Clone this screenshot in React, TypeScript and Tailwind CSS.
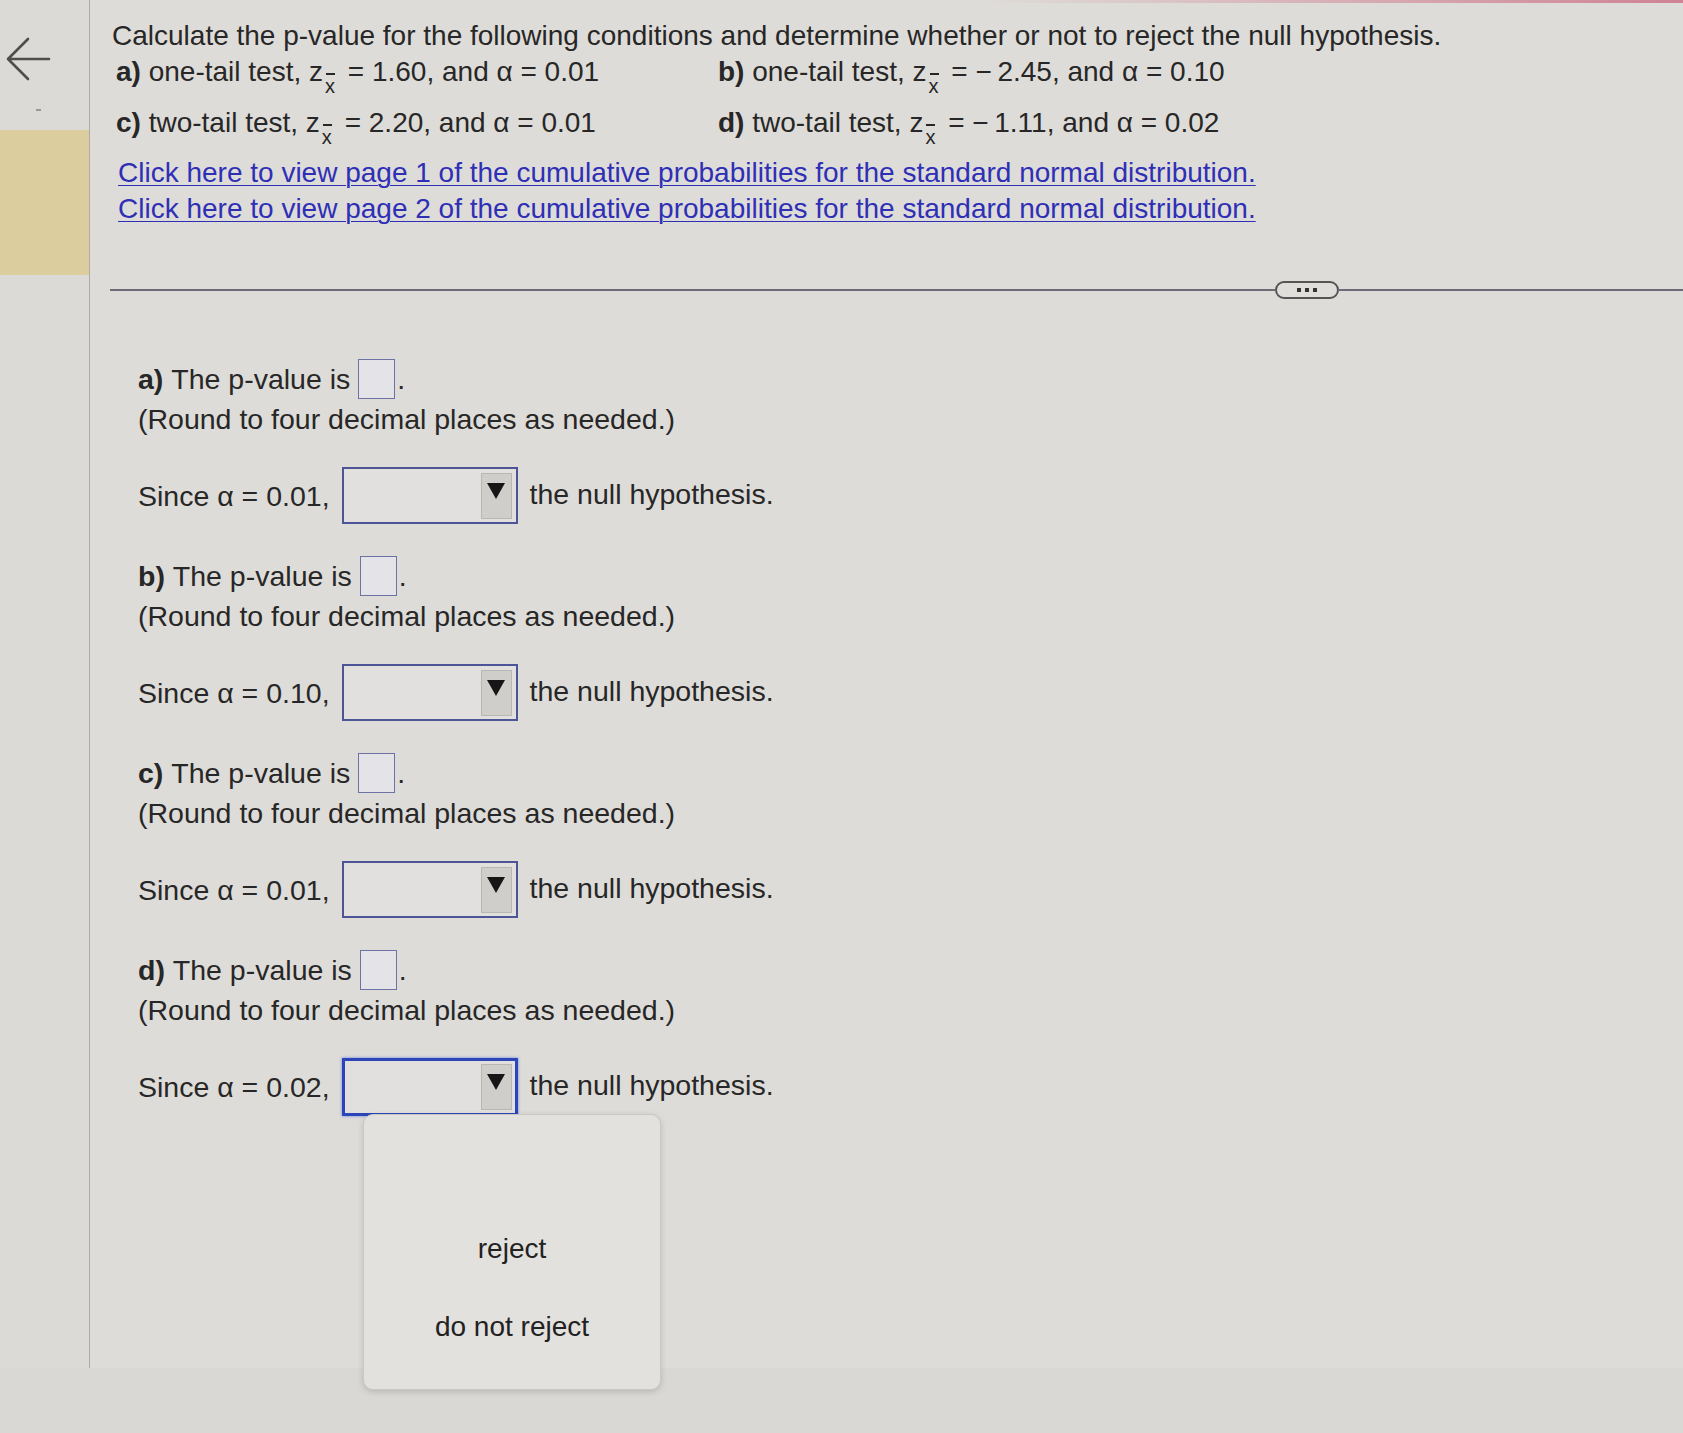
// z with an x-bar subscript, as the question text shows it
function Zx() {
  return (
    <span>
      z
      <span className="relative ml-[1px] mr-[2px] inline-block h-[1px] w-[14px]">
        <span className="absolute bottom-[6px] left-[2px] h-[2px] w-[9px] bg-current" />
        <span className="absolute left-[1px] top-[-4px] text-[20px] leading-[20px]">x</span>
      </span>
    </span>
  );
}

function Question({ label, text, z, alpha }: { label: string; text: string; z: string; alpha: string }) {
  return (
    <div className="leading-[32px]">
      <span className="font-bold">{label}</span> {text}, <Zx /> = {z}, and α = {alpha}
    </div>
  );
}

function AnswerBox() {
  return (
    <span className="mx-[8px] inline-block h-[40px] w-[37px] border-[1.5px] border-[#6d72a6] bg-[#e4e4e8]" />
  );
}

function Dropdown({ focused }: { focused?: boolean }) {
  return (
    <div
      className={
        focused
          ? "mx-[12px] flex h-[58px] w-[176px] items-center justify-end border-[3px] border-[#2c45b8] bg-[#e1e0de] pr-[3px] shadow-[0_0_3px_#6f86e0]"
          : "mx-[12px] flex h-[57px] w-[176px] items-center justify-end border-2 border-[#4d5596] bg-[#e1e0de] pr-[4px]"
      }
    >
      <div className="flex h-[46px] w-[31px] items-start justify-center border border-[#b8b7b4] bg-[#cfcecb] pt-[8px]">
        <svg width="20" height="18" viewBox="0 0 20 18">
          <path d="M1 1 H19 L10 17 Z" fill="#161616" />
        </svg>
      </div>
    </div>
  );
}

function Part({
  label,
  alpha,
  focused,
  first,
}: {
  label: string;
  alpha: string;
  focused?: boolean;
  first?: boolean;
}) {
  return (
    <div className={first ? "mt-[60px]" : "mt-[32px]"}>
      <div className="flex h-[40px] items-center leading-[32px]">
        <span className="font-bold">{label}</span>&nbsp;The p-value is
        <AnswerBox />
        <span className="-ml-[6px]">.</span>
      </div>
      <div className="mt-[4px] leading-[32px]">(Round to four decimal places as needed.)</div>
      <div className="relative mt-[32px] flex items-center leading-[32px]">
        <span>Since α = {alpha},</span>
        <Dropdown focused={focused} />
        <span className="-mt-[4px]">the null hypothesis.</span>
        {focused && (
          <div className="absolute left-[225px] top-[56px] z-10 flex h-[276px] w-[298px] flex-col items-center rounded-[10px] border border-[#cac8c4] bg-[#e3e1de] pt-[118px] text-[28px] text-[#222] shadow-[0_2px_6px_rgba(0,0,0,0.15)]">
            <div className="leading-[32px]">reject</div>
            <div className="mt-[46px] leading-[32px]">do not reject</div>
          </div>
        )}
      </div>
    </div>
  );
}

export default function App() {
  return (
    <div className="min-h-[1433px] bg-[#dedcd8] font-['Liberation_Sans',Arial,sans-serif] text-[#272727]">
      <div className="flex h-[1368px]">
        {/* left rail */}
        <div className="flex w-[90px] shrink-0 flex-col border-r border-[#aeaca8] bg-[#dcdad6]">
          <svg className="ml-[5px] mt-[37px]" width="46" height="44" viewBox="0 0 46 44" fill="none">
            <path d="M44 22 H3 M23 2 L3 22 L23 42" stroke="#4e4e4e" strokeWidth="2.6" strokeLinecap="round" strokeLinejoin="round" />
          </svg>
          <div className="ml-[36px] mt-[28px] h-[2px] w-[5px] bg-[#9a9894]" />
          <div className="mt-[19px] h-[145px] w-full bg-[#dbcd9e]" />
        </div>

        {/* main */}
        <div className="relative flex-1">
          <div className="absolute right-0 top-0 h-[3px] w-[700px] bg-gradient-to-r from-transparent to-[#cf8394]" />

          <div className="pl-[22px] pt-[20px] text-[28px]">
            <div className="leading-[32px]">
              Calculate the p-value for the following conditions and determine whether or not to reject the null hypothesis.
            </div>
            <div className="ml-[4px] mt-[4px] grid grid-cols-[602px_1fr] gap-y-[19px]">
              <Question label="a)" text="one-tail test" z="1.60" alpha="0.01" />
              <Question label="b)" text="one-tail test" z={"\u2212\u20092.45"} alpha="0.10" />
              <Question label="c)" text="two-tail test" z="2.20" alpha="0.01" />
              <Question label="d)" text="two-tail test" z={"\u2212\u20091.11"} alpha="0.02" />
            </div>
            <div className="ml-[6px] mt-[18px] flex flex-col gap-[4px] text-[#2f2fb6]">
              <a className="w-fit leading-[32px] underline decoration-1 underline-offset-[3px]">
                Click here to view page 1 of the cumulative probabilities for the standard normal distribution.
              </a>
              <a className="w-fit leading-[32px] underline decoration-1 underline-offset-[3px]">
                Click here to view page 2 of the cumulative probabilities for the standard normal distribution.
              </a>
            </div>
          </div>

          {/* divider with handle */}
          <div className="ml-[20px] mt-[56px] flex items-center">
            <div className="h-[2px] w-[1165px] bg-[#6c6b76]" />
            <div className="flex h-[18px] w-[64px] items-center justify-center gap-[4px] rounded-full border-2 border-[#555] bg-[#e0dedb]">
              <span className="h-[4px] w-[4px] bg-[#333]" />
              <span className="h-[4px] w-[4px] bg-[#333]" />
              <span className="h-[4px] w-[4px] bg-[#333]" />
            </div>
            <div className="h-[2px] flex-1 bg-[#6c6b76]" />
          </div>

          <div className="pl-[48px] text-[28.5px]">
            <Part label="a)" alpha="0.01" first />
            <Part label="b)" alpha="0.10" />
            <Part label="c)" alpha="0.01" />
            <Part label="d)" alpha="0.02" focused />
          </div>
        </div>
      </div>
      <div className="h-[65px] bg-[#dad8d4]" />
    </div>
  );
}
